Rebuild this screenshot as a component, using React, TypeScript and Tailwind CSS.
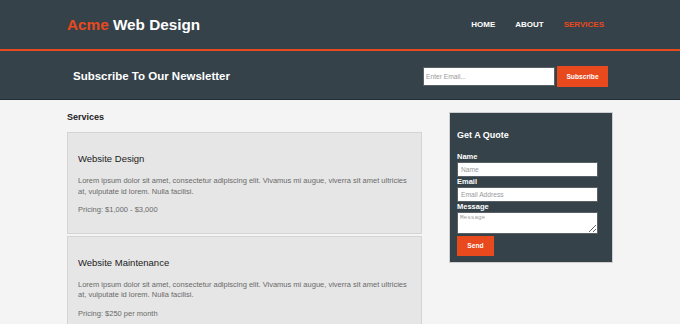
export default function App() {
    const services = [
        { title: "Website Design", price: "Pricing: $1,000 - $3,000" },
        { title: "Website Maintenance", price: "Pricing: $250 per month" },
    ];

    return (
        <div className="h-[324px] overflow-hidden bg-[#f4f4f4] font-['Liberation_Sans',Arial,sans-serif]">
            {/* Header */}
            <header className="border-b-2 border-[#e8491d] bg-[#35424a]">
                <div className="mx-auto flex h-[49px] w-[546px] items-center justify-between">
                    <h1 className="pt-px text-[15.3px] font-bold leading-none text-white">
                        <span className="text-[#e8491d]">Acme</span> Web Design
                    </h1>
                    <nav className="flex gap-[20px] pr-[9px] text-[8px] font-bold uppercase leading-none">
                        <a className="text-white">Home</a>
                        <a className="text-white">About</a>
                        <a className="text-[#e8491d]">Services</a>
                    </nav>
                </div>
            </header>

            {/* Newsletter */}
            <section className="border-b border-[#1d2e38] bg-[#35424a]">
                <div className="mx-auto flex h-[48px] w-[546px] items-center justify-between pl-[6px] pr-[5px] pt-[3px]">
                    <h2 className="text-[11.5px] font-bold leading-none text-white">
                        Subscribe To Our Newsletter
                    </h2>
                    <form className="flex items-center">
                        <input
                            type="email"
                            placeholder="Enter Email..."
                            className="h-[19px] w-[132px] border border-[#5a6166] bg-white px-[2px] text-[6.67px] outline-none placeholder:text-[#9a9a9a]"
                        />
                        <button
                            type="button"
                            className="ml-[2px] h-[21px] w-[51px] bg-[#e8491d] text-[6.67px] font-bold text-white"
                        >
                            Subscribe
                        </button>
                    </form>
                </div>
            </section>

            {/* Main */}
            <section className="mx-auto flex w-[546px] items-start justify-between">
                <article className="w-[355px] pt-[11px]">
                    <h1 className="text-[9px] font-bold leading-[12px] text-[#222]">
                        Services
                    </h1>
                    <ul className="mt-[9px]">
                        {services.map((s) => (
                            <li
                                key={s.title}
                                className="mb-[2px] border border-[#d4d4d4] bg-[#e6e6e6] px-[10px] pb-[17px] pt-[20px]"
                            >
                                <h3 className="text-[9.5px] leading-[12px] text-[#1a1a1a]">
                                    {s.title}
                                </h3>
                                <p className="mt-[11px] text-[7.5px] leading-[10.5px] text-[#6a6a6a]">
                                    Lorem ipsum dolor sit amet, consectetur adipiscing elit. Vivamus mi augue, viverra sit amet ultricies at, vulputate id lorem. Nulla facilisi.
                                </p>
                                <p className="mt-[8px] text-[7.5px] leading-[10.5px] text-[#6a6a6a]">
                                    {s.price}
                                </p>
                            </li>
                        ))}
                    </ul>
                </article>

                {/* Sidebar */}
                <aside className="mt-[12px] w-[164px] border border-[#cfcfcf] bg-[#35424a] px-[7px] pb-[6px] pt-[16px] text-white">
                    <h3 className="mb-[11px] text-[9px] font-bold leading-[12px]">
                        Get A Quote
                    </h3>
                    <form>
                        <label className="block text-[7.5px] font-bold leading-[10px]">
                            Name
                        </label>
                        <input
                            type="text"
                            placeholder="Name"
                            className="block h-[15px] w-[141px] border border-[#5a6166] bg-white px-[3px] text-[6.67px] text-black outline-none placeholder:text-[#9a9a9a]"
                        />
                        <label className="block text-[7.5px] font-bold leading-[10px]">
                            Email
                        </label>
                        <input
                            type="email"
                            placeholder="Email Address"
                            className="block h-[15px] w-[141px] border border-[#5a6166] bg-white px-[3px] text-[6.67px] text-black outline-none placeholder:text-[#9a9a9a]"
                        />
                        <label className="block text-[7.5px] font-bold leading-[10px]">
                            Message
                        </label>
                        <textarea
                            placeholder="Message"
                            className="block h-[22px] w-[141px] border border-[#5a6166] bg-white px-[2px] py-[1px] font-['Liberation_Mono',monospace] text-[6px] leading-[8px] text-black outline-none placeholder:text-[#9a9a9a]"
                        />
                        <button
                            type="button"
                            className="mt-[2px] block h-[20px] w-[37px] bg-[#e8491d] text-[6.67px] font-bold text-white"
                        >
                            Send
                        </button>
                    </form>
                </aside>
            </section>
        </div>
    );
}
